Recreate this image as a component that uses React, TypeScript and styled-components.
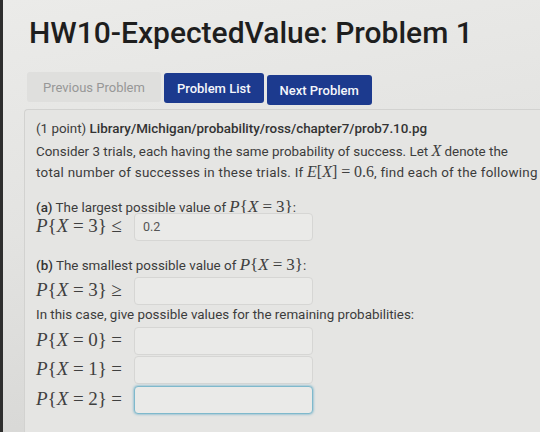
import styled, { createGlobalStyle } from 'styled-components';

const GlobalStyle = createGlobalStyle`
  html, body {
    margin: 0;
    padding: 0;
  }
  body {
    width: 540px;
    height: 432px;
    overflow: hidden;
    font-family: Roboto, 'Liberation Sans', sans-serif;
    color: #3c3c3c;
    background: linear-gradient(170deg, #ebebe9 0%, #e3e3e1 45%, #d4d4d2 100%);
  }
`;

const Screen = styled.div`
  height: 432px;
  overflow: hidden;
  border-left: 3px solid #2e2e2e;
  box-sizing: border-box;
  padding: 11px 0 0 21px;
`;

const Title = styled.h1`
  margin: 0 0 0 5px;
  font-size: 30px;
  font-weight: 500;
  color: #1e1e1e;
  line-height: 44px;
  white-space: nowrap;
`;

const Nav = styled.nav`
  display: flex;
  align-items: flex-start;
  gap: 3px;
  margin: 17px 0 0 3px;
`;

const NavButton = styled.button<{ $disabled?: boolean; $offset?: number }>`
  height: 30px;
  padding: 0 ${(p) => (p.$disabled ? 16 : 13)}px;
  margin-top: ${(p) => p.$offset ?? 0}px;
  border: none;
  border-radius: 3px;
  font-family: Roboto, 'Liberation Sans', sans-serif;
  font-size: 13px;
  font-weight: ${(p) => (p.$disabled ? 400 : 500)};
  color: ${(p) => (p.$disabled ? '#979797' : '#f4f6fb')};
  background: ${(p) => (p.$disabled ? '#dfdfdd' : '#1c3a8e')};
`;

const ProblemBox = styled.section`
  margin-top: 4px;
  margin-right: -20px;
  padding: 8px 0 20px 11px;
  border: 1px solid #d2d2d0;
  border-right: none;
  border-radius: 4px 0 0 0;
  background: #e5e5e3;
  font-size: 13.4px;
  line-height: 21.5px;
  white-space: nowrap;
`;

const Para = styled.p<{ $gap?: number; $track?: number }>`
  margin: ${(p) => p.$gap ?? 0}px 0 0;
  height: 21.5px;
  letter-spacing: ${(p) => p.$track ?? 0}px;
`;

const Bold = styled.b`
  font-weight: 500;
  color: #333;
`;

const M = styled.span<{ $size?: number }>`
  font-family: 'Liberation Serif', 'DejaVu Serif', serif;
  font-style: italic;
  font-size: ${(p) => p.$size ?? 16}px;
  color: #404040;
  letter-spacing: 0;
`;

const Up = styled.span`
  font-style: normal;
`;

const Rel = styled.span`
  font-style: normal;
  padding: 0 0.24em;
`;

const AnswerRow = styled.div<{ $gap?: number }>`
  display: flex;
  align-items: center;
  height: 28px;
  margin-top: ${(p) => p.$gap ?? 0}px;
`;

const Lhs = styled.span`
  width: 98px;
  font-family: 'Liberation Serif', 'DejaVu Serif', serif;
  color: #444;
`;

const Answer = styled.div<{ $focus?: boolean }>`
  box-sizing: border-box;
  width: 179px;
  height: 28px;
  padding: 0 8px;
  display: flex;
  align-items: center;
  border: 1px solid ${(p) => (p.$focus ? '#7fb9cc' : '#d6d6d4')};
  box-shadow: ${(p) => (p.$focus ? '0 0 2px 1px rgba(110, 175, 200, 0.55)' : 'none')};
  border-radius: 4px;
  background: #eaeae8;
  font-size: 12.5px;
  color: #555;
`;

const Prob = ({ n, size }: { n: string; size?: number }) => (
  <M $size={size}>
    P<Up>{'{'}</Up>X<Rel>=</Rel>
    <Up>{n}</Up>
    <Up>{'}'}</Up>
  </M>
);

const Eq = ({ n, rel }: { n: string; rel: string }) => (
  <Lhs>
    <Prob n={n} size={19} />
    <M $size={19}>
      <Rel>{rel}</Rel>
    </M>
  </Lhs>
);

const App = () => (
  <>
    <GlobalStyle />
    <Screen>
      <Title>HW10-ExpectedValue: Problem 1</Title>
      <Nav>
        <NavButton $disabled>Previous Problem</NavButton>
        <NavButton $offset={1}>Problem List</NavButton>
        <NavButton $offset={3}>Next Problem</NavButton>
      </Nav>
      <ProblemBox>
        <Para>
          (1 point) <Bold>Library/Michigan/probability/ross/chapter7/prob7.10.pg</Bold>
        </Para>
        <Para>
          Consider 3 trials, each having the same probability of success. Let <M>X</M> denote the
        </Para>
        <Para $track={0.25}>
          total number of successes in these trials. If{' '}
          <M>
            E<Up>[</Up>X<Up>]</Up>
            <Rel>=</Rel>
            <Up>0.6</Up>
          </M>
          , find each of the following
        </Para>
        <Para $gap={13}>
          <Bold>(a)</Bold> The largest possible value of <Prob n="3" size={17} />:
        </Para>
        <AnswerRow $gap={-4}>
          <Eq n="3" rel="≤" />
          <Answer>0.2</Answer>
        </AnswerRow>
        <Para $gap={13}>
          <Bold>(b)</Bold> The smallest possible value of <Prob n="3" size={17} />:
        </Para>
        <AnswerRow $gap={1}>
          <Eq n="3" rel="≥" />
          <Answer />
        </AnswerRow>
        <Para $gap={-1}>In this case, give possible values for the remaining probabilities:</Para>
        <AnswerRow $gap={2}>
          <Eq n="0" rel="=" />
          <Answer />
        </AnswerRow>
        <AnswerRow $gap={1}>
          <Eq n="1" rel="=" />
          <Answer />
        </AnswerRow>
        <AnswerRow $gap={2}>
          <Eq n="2" rel="=" />
          <Answer $focus />
        </AnswerRow>
      </ProblemBox>
    </Screen>
  </>
);

export default App;
